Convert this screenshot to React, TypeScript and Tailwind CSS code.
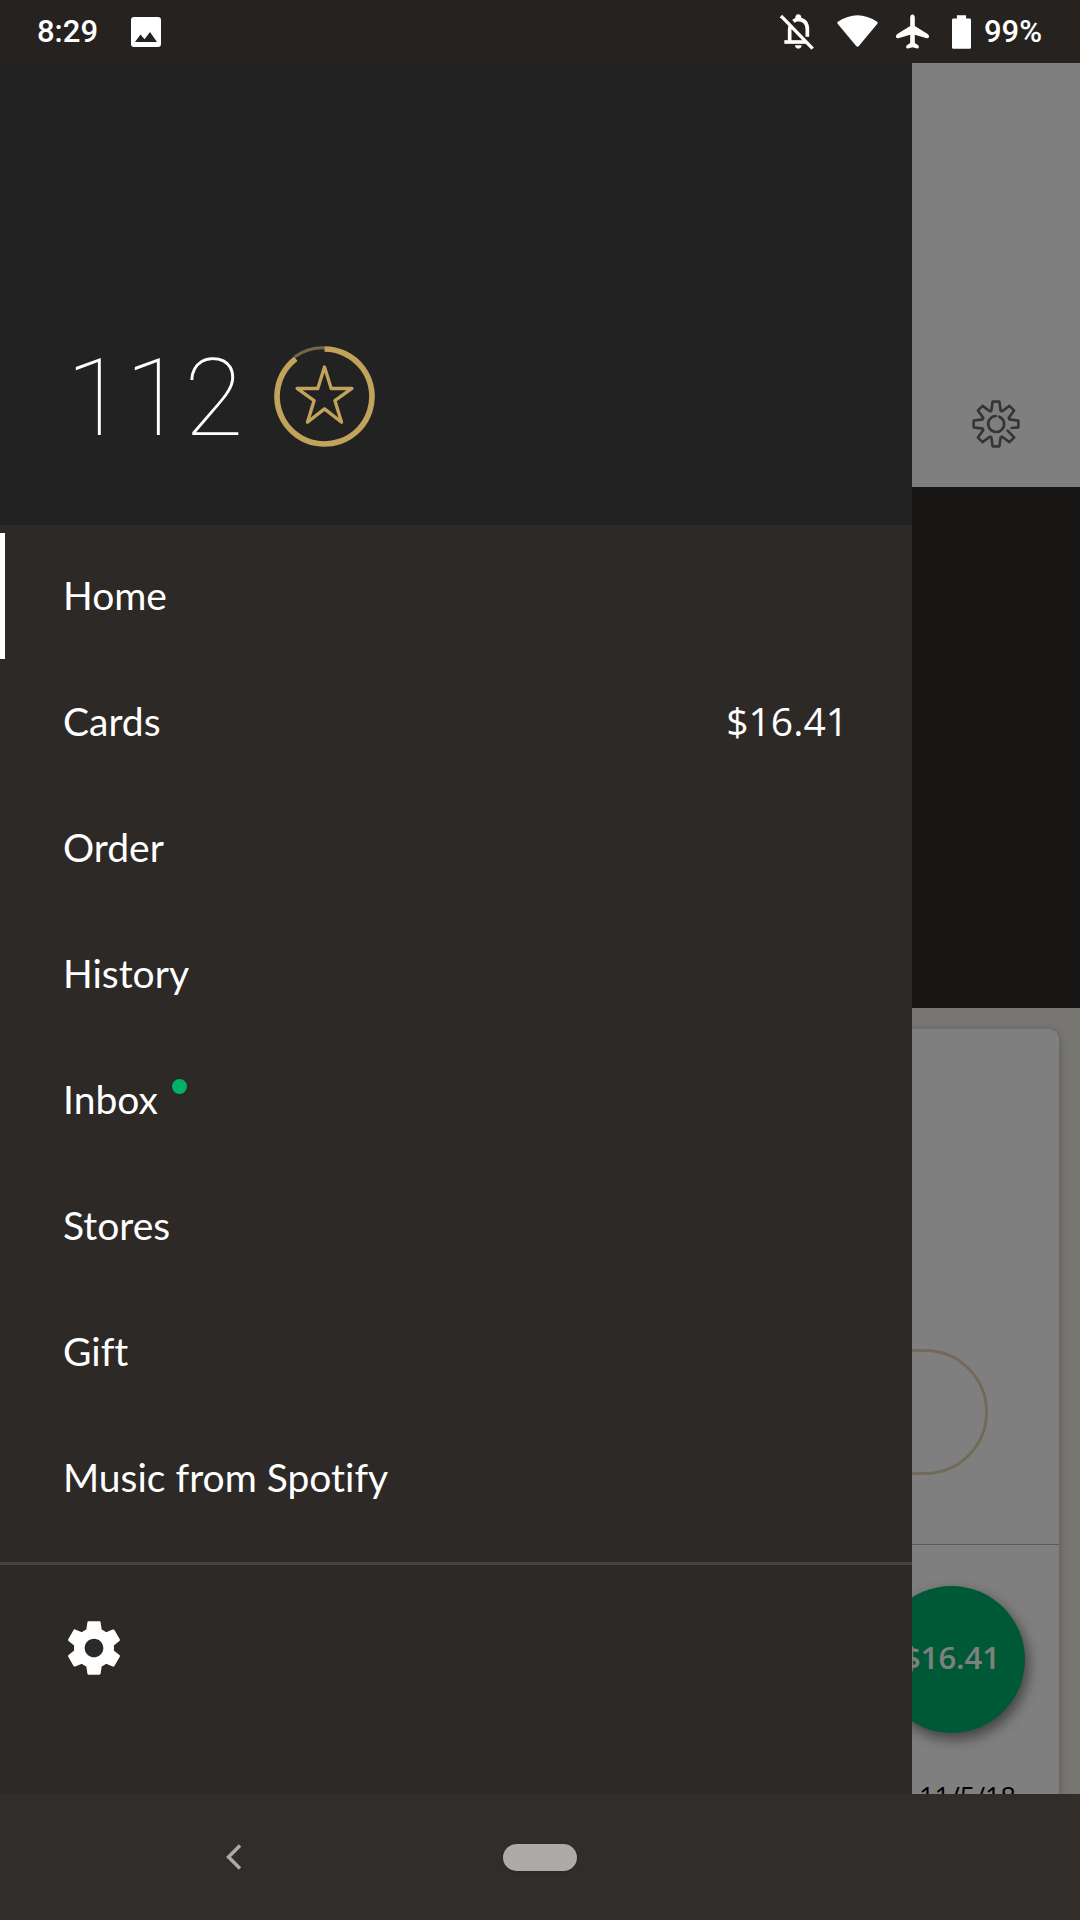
import React from "react";

const menu: { label: string; value?: string; badge?: boolean; active?: boolean }[] = [
  { label: "Home", active: true },
  { label: "Cards", value: "$16.41" },
  { label: "Order" },
  { label: "History" },
  { label: "Inbox", badge: true },
  { label: "Stores" },
  { label: "Gift" },
  { label: "Music from Spotify" },
];

function PictureIcon() {
  return (
    <svg viewBox="0 0 30 30" className="h-[30px] w-[30px]" aria-hidden="true">
      <path
        fill="#fff"
        fillRule="evenodd"
        d="M3 0H27A3 3 0 0 1 30 3V27A3 3 0 0 1 27 30H3A3 3 0 0 1 0 27V3A3 3 0 0 1 3 0ZM4 25H26L19 15L13.5 22.3L9.5 17.5Z"
      />
    </svg>
  );
}

function BellOffIcon() {
  return (
    <svg viewBox="0 0 102 108" className="h-9 w-[34px]" fill="none" stroke="#fff" aria-hidden="true">
      <path strokeWidth="11" d="M29 84V46Q29 38 33 32" />
      <path strokeWidth="11" d="M13 84H78" />
      <path strokeWidth="11" d="M40 22Q48 16 55 16Q82 18 82 46V68" />
      <path fill="#fff" stroke="none" d="M46 16V8Q48 1 55 1Q62 1 64 8V16ZM45 94H65Q64 104 55 104Q46 104 45 94Z" />
      <path strokeWidth="10" d="M3 6L98 104" />
    </svg>
  );
}

function WifiIcon() {
  return (
    <svg viewBox="0 0 122 102" className="h-[34px] w-[41px]" aria-hidden="true">
      <path fill="#fff" d="M2 20Q61 -19 120 20Q123 23 120 27L65 93Q61 97 57 93L2 27Q-1 23 2 20Z" />
    </svg>
  );
}

function PlaneIcon() {
  return (
    <svg viewBox="0 0 100 105" className="h-[35px] w-[33px]" aria-hidden="true">
      <path
        fill="#fff"
        d="M50 0Q57 1 57 9V36L96 60Q101 64 100 69Q98 74 93 73L57 62V87L67 94Q70 97 69 101Q68 105 64 104L50 100L36 104Q32 105 31 101Q30 97 33 94L43 87V62L7 73Q2 74 0 69Q-1 64 4 60L43 36V9Q43 1 50 0Z"
      />
    </svg>
  );
}

function BatteryIcon() {
  return (
    <svg viewBox="0 0 58 102" className="h-[34px] w-[19px]" aria-hidden="true">
      <path fill="#fff" d="M15 0H43V10H54Q58 10 58 14V98Q58 102 54 102H4Q0 102 0 98V14Q0 10 4 10H15Z" />
    </svg>
  );
}

function StarRing() {
  return (
    <svg viewBox="0 0 302 302" className="h-[101px] w-[101px]" fill="none" aria-hidden="true">
      <path d="M62 32A147 147 0 0 1 151 5" stroke="#786647" strokeWidth="9" />
      <path d="M151 9A142 142 0 1 1 65 38" stroke="#c2a35b" strokeWidth="17" />
      <path
        d="M151 63L171 127H233L182 163L202 228L151 188L100 228L120 163L69 127H131Z"
        stroke="#c2a35b"
        strokeWidth="10"
        strokeLinejoin="round"
      />
    </svg>
  );
}

// Eight teeth, each described relative to the hub and turned by 45 degrees.
function gearOutline(): string {
  const tooth = [
    [-14, -40],
    [-10, -67],
    [10, -67],
    [14, -40],
  ];
  const points: string[] = [];
  for (let i = 0; i < 8; i++) {
    const a = ((i + 3) * Math.PI) / 4;
    tooth.forEach(([x, y]) => {
      const px = 72 + x * Math.cos(a) - y * Math.sin(a);
      const py = 72 + x * Math.sin(a) + y * Math.cos(a);
      points.push(px.toFixed(1) + " " + py.toFixed(1));
    });
  }
  // The outline stays open at the lower side of the right tooth.
  points[0] = "107 92";
  points[points.length - 1] = "119 84";
  return "M" + points.join("L");
}

function GearOutlineIcon() {
  return (
    <svg
      viewBox="0 0 144 144"
      className="h-12 w-12"
      fill="none"
      stroke="#6a6a6a"
      strokeWidth="8"
      strokeLinejoin="round"
      strokeLinecap="round"
      aria-hidden="true"
    >
      <path d={gearOutline()} />
      <path d="M82 50A24 24 0 1 1 72 48" />
    </svg>
  );
}

function SettingsIcon() {
  return (
    <svg viewBox="0 0 24 24" className="h-16 w-16" fill="#fff" aria-hidden="true">
      <path d="M19.43 12.98c.04-.32.07-.64.07-.98s-.03-.66-.07-.98l2.11-1.65c.19-.15.24-.42.12-.64l-2-3.46c-.12-.22-.39-.3-.61-.22l-2.49 1c-.52-.4-1.08-.73-1.69-.98l-.38-2.65C14.46 2.18 14.25 2 14 2h-4c-.25 0-.46.18-.49.42l-.38 2.65c-.61.25-1.17.59-1.69.98l-2.49-1c-.23-.09-.49 0-.61.22l-2 3.46c-.13.22-.07.49.12.64l2.11 1.65c-.04.32-.07.65-.07.98s.03.66.07.98l-2.11 1.65c-.19.15-.24.42-.12.64l2 3.46c.12.22.39.3.61.22l2.49-1c.52.4 1.08.73 1.69.98l.38 2.65c.03.24.24.42.49.42h4c.25 0 .46-.18.49-.42l.38-2.65c.61-.25 1.17-.59 1.69-.98l2.49 1c.23.09.49 0 .61-.22l2-3.46c.12-.22.07-.49-.12-.64l-2.11-1.65zM12 15.5c-1.93 0-3.5-1.57-3.5-3.5s1.57-3.5 3.5-3.5 3.5 1.57 3.5 3.5-1.57 3.5-3.5 3.5z" />
    </svg>
  );
}

function StatusBar() {
  return (
    <header className="flex h-[63px] shrink-0 items-center justify-between bg-[#26221f] pr-[38px] pl-[37px] font-['Roboto',sans-serif] text-[31px] leading-8 font-medium text-white">
      <div className="flex items-center gap-[33px]">
        <span>8:29</span>
        <PictureIcon />
      </div>
      <div className="flex items-center gap-[13px]">
        <div className="flex items-center gap-[23px]">
          <BellOffIcon />
          <div className="flex items-center gap-[18px]">
            <WifiIcon />
            <PlaneIcon />
          </div>
          <BatteryIcon />
        </div>
        <span>99%</span>
      </div>
    </header>
  );
}

function HomePage() {
  return (
    <div className="absolute inset-0 flex flex-col overflow-hidden bg-[#eeece6]">
      <div className="flex h-[424px] shrink-0 items-end justify-end bg-white pr-[60px] pb-[39px]">
        <button type="button" aria-label="Preferences">
          <GearOutlineIcon />
        </button>
      </div>
      <div className="h-[521px] shrink-0 bg-[#2e2c28]" />
      <section className="m-[21px] shrink-0 rounded-[10px] bg-white shadow-[0_2px_8px_rgba(0,0,0,0.25)]">
        <div className="flex h-[516px] items-end justify-end border-b border-[#b4b4b4] pr-[71px] pb-[69px]">
          <div className="h-[126px] w-[400px] rounded-full border-3 border-[#e5d5b2]" />
        </div>
        <div className="flex flex-col items-end pt-[41px] pb-10 font-['Open_Sans',sans-serif]">
          <button
            type="button"
            className="mr-[34px] flex h-[147px] w-[147px] items-center justify-center rounded-full bg-[#00b36c] pb-1 text-[31px] font-semibold text-white shadow-[3px_6px_14px_rgba(0,0,0,0.5)]"
          >
            $16.41
          </button>
          <span className="mt-[46px] mr-[43px] text-[27px] leading-[36px] text-black">11/5/18</span>
        </div>
      </section>
      <div className="absolute inset-0 bg-black/50" />
    </div>
  );
}

function Drawer() {
  return (
    <aside className="relative mr-[168px] flex flex-1 flex-col bg-[#2d2926] text-white">
      <div className="flex h-[462px] items-end bg-[#222222] pb-[78px] pl-[66px]">
        <div className="flex items-center gap-[31px]">
          <span className="pt-0.5 font-['Roboto',sans-serif] text-[108px] leading-[98px] font-thin">112</span>
          <StarRing />
        </div>
      </div>
      <nav className="border-b-3 border-[#47433f] pt-2 pb-[21px] font-['Lato',sans-serif] text-[39px] leading-[48px] [font-variant-ligatures:none]">
        <ul>
          {menu.map((item) => (
            <li key={item.label}>
              <a
                href="#"
                aria-current={item.active ? "page" : undefined}
                className={
                  item.active
                    ? "flex h-[126px] items-center justify-between border-l-5 border-white pr-16 pb-0.5 pl-[58px]"
                    : "flex h-[126px] items-center justify-between pr-16 pb-0.5 pl-[63px]"
                }
              >
                <span className="flex gap-[14px]">
                  {item.label}
                  {item.badge && <span className="mt-1 h-[15px] w-[15px] rounded-full bg-[#00b167]" />}
                </span>
                {item.value && <span className="font-['Open_Sans',sans-serif]">{item.value}</span>}
              </a>
            </li>
          ))}
        </ul>
      </nav>
      <div className="flex pt-[51px] pl-[62px]">
        <button type="button" aria-label="Settings">
          <SettingsIcon />
        </button>
      </div>
    </aside>
  );
}

function SystemNav() {
  return (
    <footer className="grid h-[126px] shrink-0 grid-cols-[1fr_auto_1fr] items-center bg-[#312d2a]">
      <button type="button" aria-label="Back" className="mr-[262px] justify-self-end">
        <svg viewBox="0 0 15 26" className="h-[26px] w-[15px]" fill="none" stroke="#adaba8" strokeWidth="3.5" aria-hidden="true">
          <path d="M14 1.5L2.5 13L14 24.5" />
        </svg>
      </button>
      <button type="button" aria-label="Home screen" className="h-[27px] w-[74px] rounded-full bg-[#adaba8] shadow-sm" />
    </footer>
  );
}

export default function App() {
  return (
    <div className="flex min-h-screen flex-col bg-[#2d2926]">
      <StatusBar />
      <main className="relative flex flex-1">
        <HomePage />
        <Drawer />
      </main>
      <SystemNav />
    </div>
  );
}
